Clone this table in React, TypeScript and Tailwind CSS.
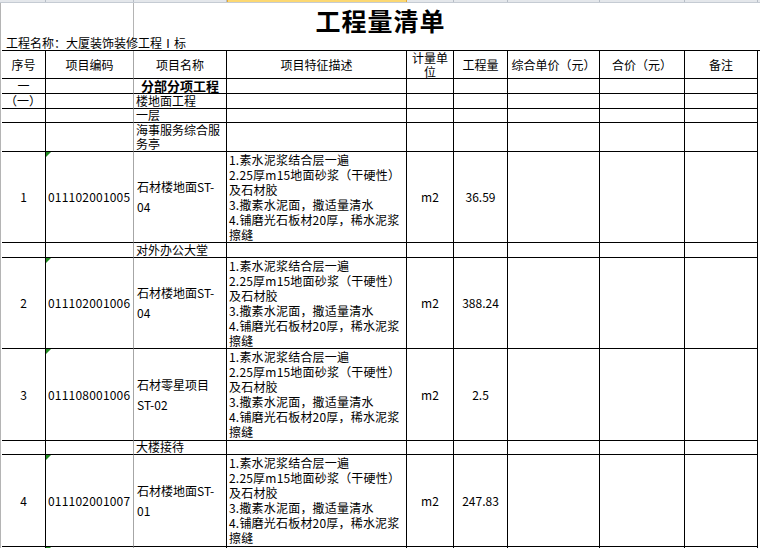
import React from 'react';

const font = 'font-["Noto_Sans_CJK_SC",sans-serif]';

// column right borders: B is only a gridline (gray), the rest are black
const colCls = [
  'border-r border-r-black',
  'border-r border-r-[#a6a6a6]',
  'border-r border-r-black',
  'border-r border-r-black',
  'border-r border-r-black',
  'border-r border-r-black',
  'border-r border-r-black',
  'border-r border-r-black',
  'border-r border-r-black',
];

const desc = [
  '1.素水泥浆结合层一遍',
  '2.25厚m15地面砂浆（干硬性）',
  '及石材胶',
  '3.撒素水泥面，撒适量清水',
  '4.铺磨光石板材20厚，稀水泥浆',
  '擦缝',
];

type Item = { no: string; code: string; name: string[]; qty: string; h: string };

const items: Record<string, Item> = {
  a: { no: '1', code: '011102001005', name: ['石材楼地面ST-', '04'], qty: '36.59', h: 'h-[91px]' },
  b: { no: '2', code: '011102001006', name: ['石材楼地面ST-', '04'], qty: '388.24', h: 'h-[91px]' },
  c: { no: '3', code: '011108001006', name: ['石材零星项目', 'ST-02'], qty: '2.5', h: 'h-[92px]' },
  d: { no: '4', code: '011102001007', name: ['石材楼地面ST-', '01'], qty: '247.83', h: 'h-[92px]' },
};

function Tri() {
  return (
    <div className="absolute left-0 top-0 w-0 h-0 border-t-[5px] border-t-[#1f8a1f] border-r-[5px] border-r-transparent" />
  );
}

function Cell({ i, className = '', children }: { i: number; className?: string; children?: React.ReactNode }) {
  return <div className={`${colCls[i]} border-b border-b-black relative ${className}`}>{children}</div>;
}

function SubRow({ h, a = '', aLeft = false, c, bold = false }: { h: string; a?: string; aLeft?: boolean; c: string[]; bold?: boolean }) {
  return (
    <>
      <Cell i={0} className={`${h} flex items-end ${aLeft ? 'pl-[3px]' : 'justify-center'} leading-[14px]`}>
        {a}
      </Cell>
      <Cell i={1} className={h} />
      <Cell
        i={2}
        className={`${h} flex flex-col justify-end leading-[14px] ${bold ? 'items-center font-bold text-[13px]' : 'pl-[2px]'}`}
      >
        {c.map((t) => (
          <div key={t} className="whitespace-nowrap">
            {t}
          </div>
        ))}
      </Cell>
      {[3, 4, 5, 6, 7, 8].map((i) => (
        <Cell key={i} i={i} className={h} />
      ))}
    </>
  );
}

function ItemRow({ it }: { it: Item }) {
  return (
    <>
      <Cell i={0} className={`${it.h} flex items-center justify-center`}>
        {it.no}
      </Cell>
      <Cell i={1} className={`${it.h} flex items-center pl-[2px] tracking-[0.2px]`}>
        <Tri />
        {it.code}
      </Cell>
      <Cell i={2} className={`${it.h} flex flex-col justify-center pl-[3px] leading-[20px]`}>
        {it.name.map((t) => (
          <div key={t} className="whitespace-nowrap">
            {t}
          </div>
        ))}
      </Cell>
      <Cell i={3} className={`${it.h} pl-[2px] leading-[15px] overflow-hidden`}>
        {desc.map((t) => (
          <div key={t} className="whitespace-nowrap tracking-[0.2px]">
            {t}
          </div>
        ))}
      </Cell>
      <Cell i={4} className={`${it.h} flex items-center justify-center`}>
        m2
      </Cell>
      <Cell i={5} className={`${it.h} flex items-center justify-center`}>
        {it.qty}
      </Cell>
      <Cell i={6} className={it.h} />
      <Cell i={7} className={it.h} />
      <Cell i={8} className={it.h} />
    </>
  );
}

export default function App() {
  const heads = ['序号', '项目编码', '项目名称', '项目特征描述', '计量单|位', '工程量', '综合单价（元）', '合价（元）', '备注'];
  const stripW = ['w-[44px]', 'w-[88px]', 'w-[93px]', 'w-[180px]', 'w-[47px]', 'w-[54px]', 'w-[92px]', 'w-[85px]', 'w-[73px]'];

  return (
    <div className={`w-[760px] h-[548px] overflow-hidden bg-white text-black text-[12px] ${font}`}>
      {/* column header strip of the sheet */}
      <div className="flex h-[3px] bg-[#e4e7eb] border-b border-b-[#c5cbd3]">
        <div className="w-[2px]" />
        {stripW.map((w, i) => (
          <div
            key={w + i}
            className={`${w} border-r ${i === 3 ? 'bg-[#fcd872] border-r-[#e2a93a] border-l border-l-[#e2a93a]' : 'border-r-[#b7bec7]'}`}
          />
        ))}
      </div>

      <div className="border-l border-l-[#b4b4b4]">
        {/* title */}
        <div className="flex h-[34px]">
          <div className="w-[133px] border-r border-r-[#b4b4b4]" />
          <div className="flex-1 flex items-end justify-center pr-[133px] pb-[2px]">
            <span className="text-[25px] font-bold leading-[30px] tracking-[1px]">工程量清单</span>
          </div>
        </div>
        <div className="h-[13px] flex items-end pl-[5px] leading-[14px] whitespace-nowrap">
          工程名称：大厦装饰装修工程Ⅰ标
        </div>

        {/* table */}
        <div className="ml-[1px] grid grid-cols-[44px_88px_93px_180px_47px_54px_92px_85px_73px] border-t border-t-black">
          {heads.map((t, i) => (
            <Cell key={t} i={i} className="h-[28px] flex flex-col items-center justify-center leading-[14px]">
              {t.split('|').map((s) => (
                <div key={s} className="whitespace-nowrap">
                  {s}
                </div>
              ))}
            </Cell>
          ))}

          <SubRow h="h-[15px]" a="一" c={['分部分项工程']} bold />
          <SubRow h="h-[15px]" a="（一）" aLeft c={['楼地面工程']} />
          <SubRow h="h-[14px]" c={['一层']} />
          <SubRow h="h-[29px]" c={['海事服务综合服', '务亭']} />
          <ItemRow it={items.a} />
          <SubRow h="h-[15px]" c={['对外办公大堂']} />
          <ItemRow it={items.b} />
          <ItemRow it={items.c} />
          <SubRow h="h-[14px]" c={['大楼接待']} />
          <ItemRow it={items.d} />
          {[0, 1, 2, 3, 4, 5, 6, 7, 8].map((i) => (
            <Cell key={i} i={i} className="h-[20px]">
              {i === 1 && <Tri />}
            </Cell>
          ))}
        </div>
      </div>
    </div>
  );
}
